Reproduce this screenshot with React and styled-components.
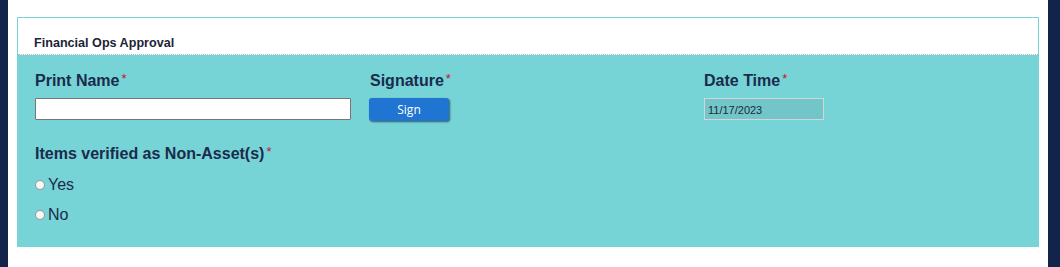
import React from "react";
import styled, { createGlobalStyle } from "styled-components";

const Global = createGlobalStyle`
  html, body { margin: 0; padding: 0; background: #ffffff; }
  body { font-family: "Liberation Sans", Arial, sans-serif; }
`;

const Page = styled.div`
  display: flex;
  height: 267px;
  width: 1060px;
`;

const SideBar = styled.div`
  width: ${(p) => p.$w}px;
  flex: none;
  background: #12244a;
`;

const Main = styled.div`
  flex: 1;
  background: #ffffff;
  padding: 17px 9px 0 9px;
`;

const Card = styled.section`
  border: 1px solid #76d3d6;
  border-bottom: none;
`;

const Header = styled.div`
  height: 37px;
  display: flex;
  align-items: flex-end;
  padding: 0 0 4px 16px;
  box-sizing: border-box;
  border-bottom: 1px dotted #b8b8b8;
  background: #ffffff;
`;

const Title = styled.h2`
  margin: 0;
  font-family: "Liberation Sans", Arial, sans-serif;
  font-size: 12.6px;
  line-height: 14px;
  font-weight: 700;
  color: #1c2436;
`;

const Panel = styled.div`
  background: #76d3d6;
  padding: 17px 0 23px 17px;
  height: 192px;
  box-sizing: border-box;
`;

const Grid = styled.div`
  display: grid;
  grid-template-columns: 335px 334px 1fr;
`;

const Field = styled.div`
  display: flex;
  flex-direction: column;
  align-items: flex-start;
`;

const Label = styled.label`
  font-family: "Liberation Sans", Arial, sans-serif;
  font-size: 16px;
  line-height: 18px;
  font-weight: 700;
  color: #1a2b4c;
  margin-bottom: ${(p) => p.$mb ?? 8}px;
`;

const Req = styled.span`
  color: #c8102e;
  font-size: 13px;
  font-weight: 400;
  vertical-align: top;
  margin-left: 2px;
  position: relative;
  top: -2px;
`;

const TextInput = styled.input`
  width: 316px;
  height: 22px;
  box-sizing: border-box;
  border: 1px solid #767676;
  border-radius: 1px;
  background: #ffffff;
  padding: 0 4px;
  margin: 0;
  font-family: "Liberation Sans", Arial, sans-serif;
  font-size: 13px;
`;

const SignButton = styled.button`
  width: 80px;
  height: 23px;
  margin: 0 0 0 -1px;
  border: none;
  border-radius: 3px;
  background: #1f75d1;
  color: #ffffff;
  font-family: "Open Sans", "Segoe UI", sans-serif;
  font-size: 12px;
  line-height: 23px;
  padding: 0;
  box-shadow: 1px 1px 2px rgba(0, 0, 0, 0.55);
  cursor: pointer;
`;

const DateBox = styled.div`
  width: 120px;
  height: 22px;
  box-sizing: border-box;
  border: 1px solid #d2d6d6;
  background: #72c6c9;
  display: flex;
  align-items: center;
  padding: 1px 0 0 3px;
  font-family: "Liberation Sans", Arial, sans-serif;
  font-size: 11px;
  color: #1c2b3a;
`;

const Question = styled.div`
  margin-top: 24px;
  display: flex;
  flex-direction: column;
  align-items: flex-start;
`;

const Options = styled.div`
  display: flex;
  flex-direction: column;
  gap: 12px;
  margin-top: 13px;
`;

const Option = styled.label`
  display: flex;
  align-items: center;
  font-family: "Liberation Sans", Arial, sans-serif;
  font-size: 16px;
  line-height: 18px;
  color: #1a2b4c;
`;

const Radio = styled.input`
  appearance: none;
  width: 10px;
  height: 10px;
  margin: 0 3px 0 0;
  border: 1px solid #9a9a9a;
  border-radius: 50%;
  background: radial-gradient(circle at 50% 40%, #ffffff 0%, #f2f2f2 70%, #e0e0e0 100%);
  box-sizing: border-box;
`;

export default function App() {
  return (
    <>
      <Global />
      <Page>
        <SideBar $w={8} />
        <Main>
          <Card>
            <Header>
              <Title>Financial Ops Approval</Title>
            </Header>
            <Panel>
              <Grid>
                <Field>
                  <Label>
                    Print Name<Req>*</Req>
                  </Label>
                  <TextInput type="text" />
                </Field>
                <Field>
                  <Label>
                    Signature<Req>*</Req>
                  </Label>
                  <SignButton type="button">Sign</SignButton>
                </Field>
                <Field>
                  <Label>
                    Date Time<Req>*</Req>
                  </Label>
                  <DateBox>11/17/2023</DateBox>
                </Field>
              </Grid>
              <Question>
                <Label $mb={0}>
                  Items verified as Non-Asset(s)<Req>*</Req>
                </Label>
                <Options>
                  <Option>
                    <Radio type="radio" name="nonasset" />
                    Yes
                  </Option>
                  <Option>
                    <Radio type="radio" name="nonasset" />
                    No
                  </Option>
                </Options>
              </Question>
            </Panel>
          </Card>
        </Main>
        <SideBar $w={12} />
      </Page>
    </>
  );
}
